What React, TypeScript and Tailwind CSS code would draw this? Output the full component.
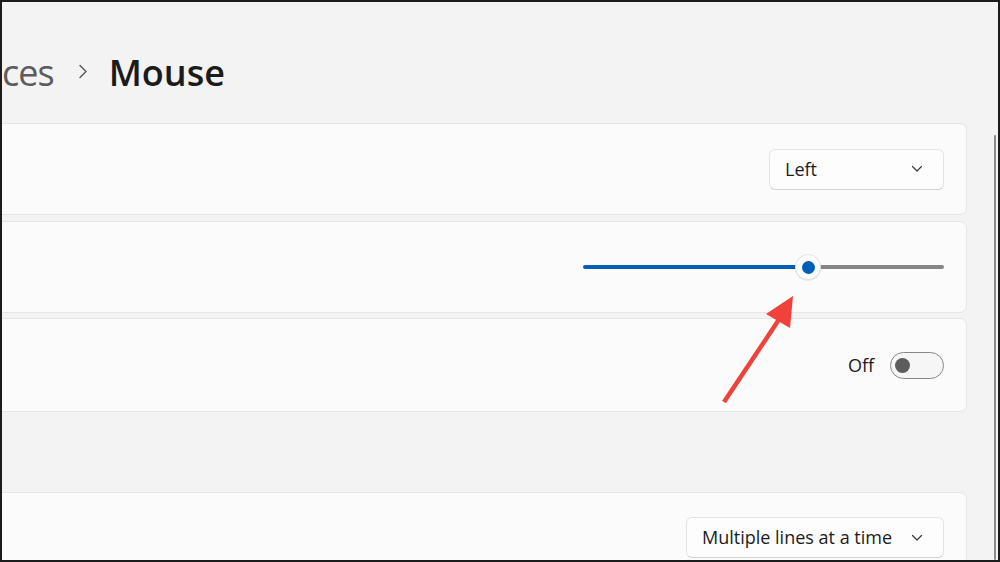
function Chevron({ className }: { className?: string }) {
  return (
    <svg width="12" height="8" viewBox="0 0 12 8" className={className}>
      <polyline points="1.5,1.5 6,6 10.5,1.5" fill="none" stroke="#3a3a3a" strokeWidth="1.2" strokeLinecap="round" strokeLinejoin="round" />
    </svg>
  );
}

function Dropdown({ label, width }: { label: string; width: string }) {
  return (
    <div
      className={`${width} h-[41px] flex items-center justify-between pl-[15px] pr-[20px] bg-[#fdfdfd] border border-[#e3e3e3] border-b-[#d2d2d2] rounded-[6px] text-[18px] text-[#1b1b1b]`}
    >
      <span>{label}</span>
      <Chevron />
    </div>
  );
}

function Card({ className, children }: { className?: string; children?: React.ReactNode }) {
  return (
    <div
      className={`flex items-center justify-end pr-[22px] bg-[#fbfbfb] border border-[#e5e5e5] rounded-[7px] ${className ?? ""}`}
    >
      {children}
    </div>
  );
}

export default function App() {
  return (
    <div className="relative w-[1000px] h-[562px] overflow-hidden border-2 border-[#1b1b1b] bg-[#f3f3f3] font-['Open_Sans',sans-serif]">
      {/* breadcrumb */}
      <div className="flex pt-[46px] h-[121px] items-start text-[36px] leading-[49px]">
        <span className="text-[#5c5c5c] tracking-[-1px]">ces</span>
        <svg width="10" height="15" viewBox="0 0 10 15" className="ml-[24px] mr-[21px] mt-[16px]">
          <polyline points="2,1.5 8,7.5 2,13.5" fill="none" stroke="#5c5c5c" strokeWidth="1.5" strokeLinecap="round" strokeLinejoin="round" />
        </svg>
        <span className="font-semibold text-[#1b1b1b]">Mouse</span>
      </div>

      {/* settings cards */}
      <div className="flex flex-col -ml-[12px] mr-[31px]">
        <Card className="h-[92px]">
          <Dropdown label="Left" width="w-[175px]" />
        </Card>

        <Card className="h-[92px] mt-[6px]">
          <div className="relative w-[361px] h-[26px] flex items-center">
            <div className="h-[4px] w-[225px] bg-[#005fb8] rounded-l-full" />
            <div className="h-[4px] flex-1 bg-[#868686] rounded-r-full" />
            <div className="absolute left-[212px] top-0 w-[26px] h-[26px] rounded-full bg-white border border-[#e2e2e2] shadow-[0_1px_1px_rgba(0,0,0,0.08)] flex items-center justify-center">
              <div className="w-[13px] h-[13px] rounded-full bg-[#005fb8]" />
            </div>
          </div>
        </Card>

        <Card className="h-[94px] mt-[5px]">
          <span className="text-[18px] text-[#1b1b1b] mr-[16px]">Off</span>
          <div className="w-[54px] h-[27px] rounded-full border border-[#868686] bg-[#f6f6f6] flex items-center pl-[4px]">
            <div className="w-[15px] h-[15px] rounded-full bg-[#5c5c5c]" />
          </div>
        </Card>

        <Card className="h-[92px] mt-[80px] items-start pt-[24px]">
          <Dropdown label="Multiple lines at a time" width="w-[258px]" />
        </Card>
      </div>

      {/* scrollbar */}
      <div className="absolute right-[2px] top-[133px] bottom-0 w-[2px] bg-[#8a8a8a] rounded-full" />

      {/* red annotation arrow */}
      <svg className="absolute left-0 top-0 pointer-events-none" width="1000" height="562" viewBox="2 2 1000 562">
        <line x1="724" y1="402" x2="780" y2="318" stroke="#f0413a" strokeWidth="4.5" />
        <polygon points="793,296 766,314 790,328" fill="#f0413a" />
      </svg>
    </div>
  );
}
